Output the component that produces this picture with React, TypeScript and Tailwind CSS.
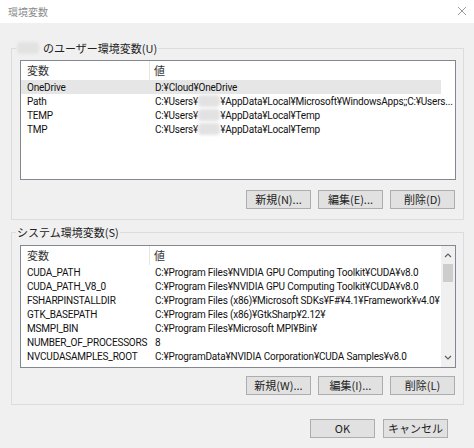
import React from 'react';

const font = { fontFamily: "Roboto, 'Noto Sans CJK JP', sans-serif" };
const cjk = { fontFamily: "'Noto Sans CJK JP', sans-serif" };

const Blur: React.FC<{ w: string }> = ({ w }) => (
    <span className={`inline-block ${w} h-[12px] align-middle bg-[#e2e2e2] blur-[1.5px] rounded-sm`} />
);

const userVars: { name: string; value: React.ReactNode }[] = [
    { name: 'OneDrive', value: 'D:¥Cloud¥OneDrive' },
    {
        name: 'Path',
        value: (
            <>
                C:¥Users¥<Blur w="w-[22px]" />¥AppData¥Local¥Microsoft¥WindowsApps;;C:¥Users...
            </>
        ),
    },
    {
        name: 'TEMP',
        value: (
            <>
                C:¥Users¥<Blur w="w-[22px]" />¥AppData¥Local¥Temp
            </>
        ),
    },
    {
        name: 'TMP',
        value: (
            <>
                C:¥Users¥<Blur w="w-[22px]" />¥AppData¥Local¥Temp
            </>
        ),
    },
];

const systemVars = [
    { name: 'CUDA_PATH', value: 'C:¥Program Files¥NVIDIA GPU Computing Toolkit¥CUDA¥v8.0' },
    { name: 'CUDA_PATH_V8_0', value: 'C:¥Program Files¥NVIDIA GPU Computing Toolkit¥CUDA¥v8.0' },
    { name: 'FSHARPINSTALLDIR', value: 'C:¥Program Files (x86)¥Microsoft SDKs¥F#¥4.1¥Framework¥v4.0¥' },
    { name: 'GTK_BASEPATH', value: 'C:¥Program Files (x86)¥GtkSharp¥2.12¥' },
    { name: 'MSMPI_BIN', value: 'C:¥Program Files¥Microsoft MPI¥Bin¥' },
    { name: 'NUMBER_OF_PROCESSORS', value: '8' },
    { name: 'NVCUDASAMPLES_ROOT', value: 'C:¥ProgramData¥NVIDIA Corporation¥CUDA Samples¥v8.0' },
];

const Button: React.FC<{ label: string }> = ({ label }) => (
    <button
        className="w-[65px] h-[19px] border border-[#adadad] bg-[#e1e1e1] text-[11px] leading-none text-[#222]"
        style={cjk}
    >
        {label}
    </button>
);

const Header: React.FC = () => (
    <div className="flex h-[19px] items-center text-[11px] text-[#333]" style={cjk}>
        <div className="w-[129px] pl-[6px] h-full flex items-center border-r border-[#e5e5e5]">変数</div>
        <div className="pl-[4px]">値</div>
    </div>
);

const Row: React.FC<{ name: string; value: React.ReactNode; selected?: boolean }> = ({ name, value, selected }) => (
    <div
        className={`flex h-[14px] items-center text-[10px] tracking-[-0.2px] text-[#111] whitespace-nowrap ${selected ? 'bg-[#e6e6e6] mr-[14px]' : ''}`}
    >
        <div className="w-[134px] pl-[6px] shrink-0">{name}</div>
        <div className="flex items-center">{value}</div>
    </div>
);

const App: React.FC = () => {
    return (
        <div className="w-[474px] h-[448px] bg-[#f0f0f0] flex flex-col overflow-hidden" style={font}>
            {/* title bar */}
            <div className="h-[23px] bg-white flex items-center justify-between pl-[8px] pr-[7px]">
                <span className="text-[10px] text-[#8c8c8c]" style={cjk}>環境変数</span>
                <svg width="10" height="10" viewBox="0 0 10 10" className="mt-[-2px]">
                    <path d="M1 1L9 9M9 1L1 9" stroke="#9a9a9a" strokeWidth="1" />
                </svg>
            </div>

            <div className="flex flex-col pt-[17px] pl-[11px] pr-[10px]">
                {/* user variables */}
                <fieldset className="border border-[#dcdcdc] p-0 m-0 min-w-0">
                    <legend className="ml-[4px] px-[1px] text-[11px] leading-[16px] text-[#222] flex items-center" style={cjk}>
                        <Blur w="w-[22px]" />
                        <span className="ml-[4px]">のユーザー環境変数(U)</span>
                    </legend>
                    <div className="pl-[8px] pr-[7px] pt-[4px] pb-[10px]">
                        <div className="h-[120px] bg-white border border-[#828790] overflow-hidden">
                            <Header />
                            {userVars.map((v, i) => (
                                <Row key={v.name} name={v.name} value={v.value} selected={i === 0} />
                            ))}
                        </div>
                        <div className="flex justify-end gap-[7px] mt-[10px] pr-[1px]">
                            <Button label="新規(N)..." />
                            <Button label="編集(E)..." />
                            <Button label="削除(D)" />
                        </div>
                    </div>
                </fieldset>

                {/* system variables */}
                <fieldset className="border border-[#dcdcdc] p-0 m-0 mt-[4px] min-w-0">
                    <legend className="ml-[4px] px-[1px] text-[11px] leading-[16px] text-[#222]" style={cjk}>
                        システム環境変数(S)
                    </legend>
                    <div className="pl-[8px] pr-[7px] pt-[5px] pb-[9px]">
                        <div className="h-[123px] bg-white border border-[#828790] overflow-hidden flex">
                            <div className="flex-1 min-w-0 overflow-hidden">
                                <Header />
                                {systemVars.map((v) => (
                                    <Row key={v.name} name={v.name} value={v.value} />
                                ))}
                            </div>
                            <div className="w-[14px] shrink-0 bg-[#f0f0f0] flex flex-col items-center">
                                <svg width="8" height="14" viewBox="0 0 8 14" className="mt-[2px]">
                                    <path d="M1 9L4 6L7 9" stroke="#606060" strokeWidth="1.2" fill="none" />
                                </svg>
                                <div className="w-[10px] h-[18px] bg-[#cdcdcd] mt-[2px]" />
                                <div className="flex-1" />
                                <svg width="8" height="14" viewBox="0 0 8 14" className="mb-[2px]">
                                    <path d="M1 5L4 8L7 5" stroke="#606060" strokeWidth="1.2" fill="none" />
                                </svg>
                            </div>
                        </div>
                        <div className="flex justify-end gap-[7px] mt-[8px] pr-[1px]">
                            <Button label="新規(W)..." />
                            <Button label="編集(I)..." />
                            <Button label="削除(L)" />
                        </div>
                    </div>
                </fieldset>

                {/* footer */}
                <div className="flex justify-end gap-[8px] mt-[14px] pr-[16px]">
                    <Button label="OK" />
                    <Button label="キャンセル" />
                </div>
            </div>
        </div>
    );
};

export default App;
